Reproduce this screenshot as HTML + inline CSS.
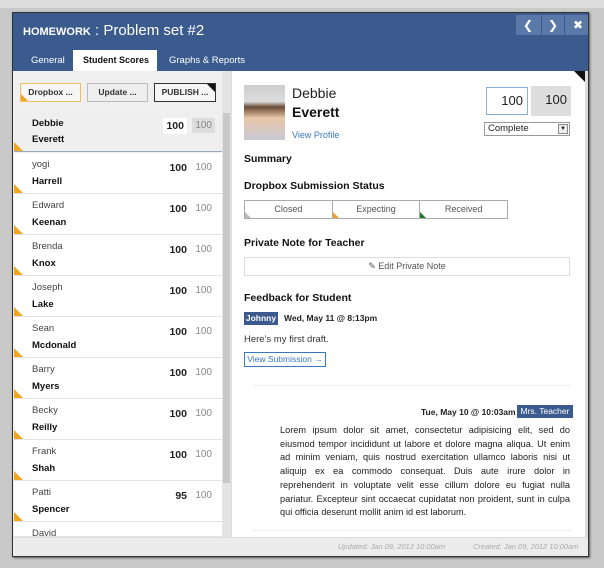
<!DOCTYPE html>
<html><head><meta charset="utf-8"><style>
*{margin:0;padding:0;box-sizing:border-box}
body{width:604px;height:568px;background:#c9c9c9;font-family:"Liberation Sans","DejaVu Sans",sans-serif;position:relative;overflow:hidden;font-size:10px;color:#222}
.a{position:absolute;white-space:nowrap}
.modal{left:12px;top:12px;width:577px;height:545px;background:#fff;border:1px solid #333;box-shadow:1px 1px 2px #555}
.hdr{left:0;top:0;width:575px;height:58px;background:#3b5b8f}
.tab{top:37px;height:21px;color:#fff;font-size:9.5px;line-height:21px;padding:0 10px}
.row{left:1px;width:208px;height:41px;background:#fff;border-bottom:1px solid #e3e3e3}
.fn{left:18px;top:6px;font-size:9.5px;color:#444}
.ln{left:18px;top:23px;font-size:9.5px;font-weight:bold;color:#111}
.sc{right:35px;top:9px;font-size:10.5px;font-weight:bold}
.mx{right:10px;top:9px;font-size:10px;color:#888}
.tri{left:0;bottom:0;width:0;height:0;border-left:9px solid #f0a61e;border-top:9px solid transparent}
.h{font-weight:bold;font-size:10.5px;color:#111}
.btn{top:70px;height:19px;border:1px solid #bbb;background:#eee;font-size:8.5px;text-align:center;line-height:17px;font-weight:bold;color:#333}
</style></head><body>
<div class="a" style="left:0;top:0;width:604px;height:8px;background:#ddd"></div>
<div class="a modal">
 <div class="a hdr"></div>
 <div class="a" style="left:10px;top:9px;color:#fff;font-size:15px"><span style="font-size:11px;font-weight:bold">HOMEWORK</span> : Problem set #2</div>
 <div class="a" style="left:503px;top:2px;width:72px;height:20px;background:#5a78a8"></div>
 <div class="a" style="left:503px;top:2px;width:72px;height:20px;color:#fff;font-weight:bold;font-size:12px;line-height:20px">
  <span class="a" style="left:7px">&#x276E;</span><span class="a" style="left:25px;top:0;width:1px;height:20px;background:#3b5b8f"></span><span class="a" style="left:32px">&#x276F;</span><span class="a" style="left:48px;top:0;width:1px;height:20px;background:#3b5b8f"></span><span class="a" style="left:57px">&#x2716;</span></div>
 <div class="a tab" style="left:8px">General</div>
 <div class="a tab" style="left:60px;background:#fff;color:#111;font-weight:bold;width:84px;padding:0 0 0 10px;font-size:9px">Student Scores</div>
 <div class="a tab" style="left:146px">Graphs &amp; Reports</div>
 <!-- left panel -->
 <div class="a" style="left:0;top:58px;width:218px;height:466px;background:#f0f0f0"></div>
 <div class="a btn" style="left:7px;width:61px;border-color:#f0c060;background:#f6f6f6">Dropbox ...<div class="a tri" style="border-left-width:7px;border-top-width:7px"></div></div>
 <div class="a btn" style="left:74px;width:61px">Update ...</div>
 <div class="a btn" style="left:141px;width:62px;border:1px solid #333;background:#f6f6f6">PUBLISH ...<div class="a" style="right:0;top:0;border-top:8px solid #111;border-left:8px solid transparent"></div></div>
 <div class="a row" style="top:98px;background:#efefef;border-bottom:1px solid #9ab"><div class="a ln" style="top:7px">Debbie</div><div class="a ln">Everett</div><div class="a" style="right:35px;top:7px;background:#fff;padding:2px 3px;font-weight:bold;font-size:10.5px">100</div><div class="a" style="right:7px;top:7px;background:#ddd;padding:2px 3px;color:#888;font-size:10px">100</div><div class="a tri"></div></div>
 <div class="a row" style="top:140px"><div class="a fn">yogi</div><div class="a ln">Harrell</div><div class="a sc">100</div><div class="a mx">100</div><div class="a tri"></div></div>
 <div class="a row" style="top:181px"><div class="a fn">Edward</div><div class="a ln">Keenan</div><div class="a sc">100</div><div class="a mx">100</div><div class="a tri"></div></div>
 <div class="a row" style="top:222px"><div class="a fn">Brenda</div><div class="a ln">Knox</div><div class="a sc">100</div><div class="a mx">100</div><div class="a tri"></div></div>
 <div class="a row" style="top:263px"><div class="a fn">Joseph</div><div class="a ln">Lake</div><div class="a sc">100</div><div class="a mx">100</div><div class="a tri"></div></div>
 <div class="a row" style="top:304px"><div class="a fn">Sean</div><div class="a ln">Mcdonald</div><div class="a sc">100</div><div class="a mx">100</div><div class="a tri"></div></div>
 <div class="a row" style="top:345px"><div class="a fn">Barry</div><div class="a ln">Myers</div><div class="a sc">100</div><div class="a mx">100</div><div class="a tri"></div></div>
 <div class="a row" style="top:386px"><div class="a fn">Becky</div><div class="a ln">Reilly</div><div class="a sc">100</div><div class="a mx">100</div><div class="a tri"></div></div>
 <div class="a row" style="top:427px"><div class="a fn">Frank</div><div class="a ln">Shah</div><div class="a sc">100</div><div class="a mx">100</div><div class="a tri"></div></div>
 <div class="a row" style="top:468px"><div class="a fn">Patti</div><div class="a ln">Spencer</div><div class="a sc">95</div><div class="a mx">100</div><div class="a tri"></div></div>
 <div class="a row" style="top:509px;height:15px"><div class="a fn">David</div></div>
 <div class="a" style="left:209px;top:58px;width:9px;height:466px;background:#e4e4e4"></div>
 <div class="a" style="left:210px;top:100px;width:7px;height:370px;background:#c8c8c8"></div>
 <div class="a" style="left:218px;top:58px;width:1px;height:466px;background:#ddd"></div>
 <!-- right panel -->
 <div class="a" style="left:561px;top:58px;border-top:12px solid #111;border-left:12px solid transparent"></div>
 <div class="a" style="left:572px;top:58px;width:3px;height:466px;background:#ddd"></div>
 <div class="a" style="left:231px;top:72px;width:41px;height:55px;background:linear-gradient(#ccc,#ddd 30%,#6b4a35 40%,#e8c6a8 60%,#c9c9d6)"></div>
 <div class="a" style="left:279px;top:72px;font-size:14px;color:#222">Debbie</div>
 <div class="a" style="left:279px;top:91px;font-size:14px;font-weight:bold;color:#111">Everett</div>
 <div class="a" style="left:279px;top:117px;font-size:9px;color:#3a77c0">View Profile</div>
 <div class="a" style="left:473px;top:74px;width:42px;height:28px;border:1px solid #8ab0e0;font-size:13px;text-align:right;padding:5px 4px 0 0">100</div>
 <div class="a" style="left:518px;top:73px;width:40px;height:30px;background:#ddd;font-size:13px;text-align:right;padding:6px 4px 0 0">100</div>
 <div class="a" style="left:471px;top:109px;width:86px;height:14px;border:1px solid #999;font-size:9.5px;padding-left:3px;line-height:12px">Complete<div class="a" style="right:1px;top:1px;width:10px;height:10px;border:1px solid #888;background:#eee;font-size:6px;text-align:center;line-height:9px">▼</div></div>
 <div class="a h" style="left:231px;top:140px">Summary</div>
 <div class="a h" style="left:231px;top:167px">Dropbox Submission Status</div>
 <div class="a" style="left:231px;top:187px;width:264px;height:19px;border:1px solid #aaa;display:flex;font-size:9px;color:#555;line-height:17px;text-align:center">
  <div style="flex:1;border-right:1px solid #aaa;position:relative">Closed<div class="a tri" style="border-left-color:#bbb;border-left-width:6px;border-top-width:6px"></div></div>
  <div style="flex:1;border-right:1px solid #aaa;position:relative">Expecting<div class="a tri" style="border-left-width:6px;border-top-width:6px"></div></div>
  <div style="flex:1;position:relative">Received<div class="a tri" style="border-left-color:#1a7a2a;border-left-width:6px;border-top-width:6px"></div></div></div>
 <div class="a h" style="left:231px;top:224px">Private Note for Teacher</div>
 <div class="a" style="left:231px;top:244px;width:326px;height:19px;border:1px solid #ddd;font-size:9px;color:#555;text-align:center;line-height:17px">&#x270E; Edit Private Note</div>
 <div class="a h" style="left:231px;top:279px">Feedback for Student</div>
 <div class="a" style="left:231px;top:299px;width:34px;height:13px;background:#3b5b8f;color:#fff;font-size:8.5px;font-weight:bold;text-align:center;line-height:13px">Johnny</div>
 <div class="a" style="left:271px;top:300px;font-size:8.5px;font-weight:bold">Wed, May 11 @ 8:13pm</div>
 <div class="a" style="left:231px;top:321px;font-size:9.5px;color:#333">Here's my first draft.</div>
 <div class="a" style="left:231px;top:339px;width:82px;height:15px;border:1px solid #3a77c0;font-size:8.5px;color:#3a77c0;text-align:center;line-height:13px">View Submission →</div>
 <div class="a" style="left:240px;top:372px;width:318px;height:1px;background:#eee"></div>
 <div class="a" style="left:408px;top:394px;font-size:8.5px;font-weight:bold">Tue, May 10 @ 10:03am</div>
 <div class="a" style="left:504px;top:392px;width:56px;height:13px;background:#3b5b8f;color:#fff;font-size:8.5px;text-align:center;line-height:13px">Mrs. Teacher</div>
 <div class="a" style="left:267px;top:411px;width:290px;font-size:9.2px;line-height:13.7px;text-align:justify;color:#222;white-space:normal">Lorem ipsum dolor sit amet, consectetur adipisicing elit, sed do eiusmod tempor incididunt ut labore et dolore magna aliqua. Ut enim ad minim veniam, quis nostrud exercitation ullamco laboris nisi ut aliquip ex ea commodo consequat. Duis aute irure dolor in reprehenderit in voluptate velit esse cillum dolore eu fugiat nulla pariatur. Excepteur sint occaecat cupidatat non proident, sunt in culpa qui officia deserunt mollit anim id est laborum.</div>
 <div class="a" style="left:240px;top:517px;width:318px;height:1px;background:#eee"></div>
 <!-- footer -->
 <div class="a" style="left:0;top:524px;width:575px;height:19px;background:#ececec;border-top:1px solid #ddd;font-size:7.5px;font-style:italic;color:#aaa;line-height:18px">
  <span class="a" style="left:325px">Updated: Jan 09, 2012 10:00am</span><span class="a" style="left:460px">Created: Jan 09, 2012 10:00am</span></div>
</div>
</body></html>
